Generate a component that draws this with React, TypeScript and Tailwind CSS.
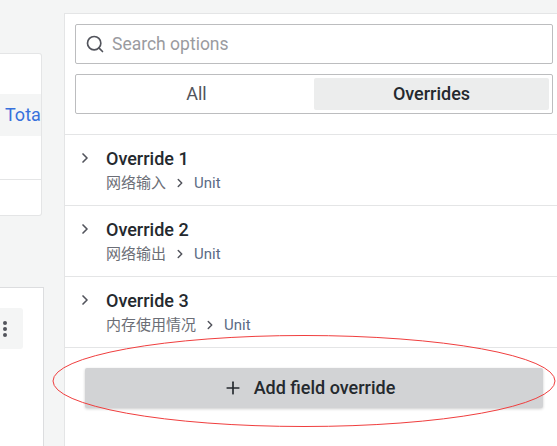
import React from 'react';
import { ChevronRight, Plus, Search } from 'lucide-react';

const overrides = [
  { name: 'Override 1', field: '网络输入' },
  { name: 'Override 2', field: '网络输出' },
  { name: 'Override 3', field: '内存使用情况' },
];

const font = { fontFamily: 'Roboto, "Noto Sans CJK SC", sans-serif' };

const App: React.FC = () => {
  return (
    <div className="relative flex h-[446px] w-[557px] overflow-hidden bg-[#f4f5f5]" style={font}>
      {/* left column, cut off by the window */}
      <div className="flex w-[64px] shrink-0 flex-col">
        <div className="mt-[53px] flex h-[163px] w-[42px] flex-col rounded-r-[3px] border border-l-0 border-[#e4e5e6] bg-white">
          <div className="mt-[40px] flex h-[42px] items-center overflow-hidden bg-[#f4f5f5] pb-[2px] pl-[5px] text-[18px] whitespace-nowrap text-[#3871dc]">
            Tota
          </div>
          <div className="mt-[43px] border-t border-[#e4e5e6]" />
        </div>
        <div className="mt-[71px] flex flex-1 w-[44px] flex-col border border-b-0 border-l-0 border-[#dcdddf] bg-white pt-[20px]">
          <div className="flex h-[41px] w-[23px] items-center justify-end rounded-r-[3px] bg-[#f4f5f5] pr-[16px]">
            <div className="flex flex-col gap-[2px]">
              <span className="h-[4px] w-[4px] rounded-full bg-[#52545c]" />
              <span className="h-[4px] w-[4px] rounded-full bg-[#52545c]" />
              <span className="h-[4px] w-[4px] rounded-full bg-[#52545c]" />
            </div>
          </div>
        </div>
      </div>

      {/* options pane */}
      <div className="mt-[13px] flex flex-1 flex-col border-t border-l border-[#e4e5e6] bg-white">
        <div className="flex flex-col gap-[10px] pt-[10px] pr-[4px] pb-[20px] pl-[10px] border-b border-[#e4e5e6]">
          <div className="flex h-[40px] items-center rounded-[2px] border border-[#bcbdbf] pl-[10px]">
            <Search size={20} strokeWidth={2} className="-ml-[1px] text-[#52545c]" />
            <span className="mt-[1px] ml-[7px] text-[17.5px] text-[#9a9b9f]">Search options</span>
          </div>
          <div className="flex h-[40px] rounded-[2px] border border-[#bcbdbf] p-[3px]">
            <div className="flex flex-1 items-center justify-center pb-[1px] text-[18px] text-[#52545c]">All</div>
            <div className="flex w-[235px] items-center justify-center rounded-[2px] bg-[#eceded] pb-[1px] text-[18px] font-medium text-[#24292e]">
              Overrides
            </div>
          </div>
        </div>

        {overrides.map((o) => (
          <div key={o.name} className="flex h-[71px] border-b border-[#e4e5e6] pt-[13px] pl-[12px]">
            <ChevronRight size={16} strokeWidth={2.5} className="mt-[2px] text-[#52545c]" />
            <div className="ml-[13px] flex flex-col">
              <div className="text-[18px] leading-[22px] font-medium text-[#24292e]">{o.name}</div>
              <div className="mt-[4px] flex items-center text-[15px] leading-[18px] text-[#6b6e76]">
                <span>{o.field}</span>
                <ChevronRight size={14} strokeWidth={2.5} className="mx-[7px] text-[#52545c]" />
                <span className="text-[#5b6b85]">Unit</span>
              </div>
            </div>
          </div>
        ))}

        <div className="pt-[20px] pr-[14px] pl-[20px]">
          <div className="flex h-[40px] items-center justify-center rounded-[2px] bg-[#d2d3d5] pr-[10px] pb-[2px] text-[18px] font-medium text-[#24292e] shadow-[0_1px_3px_rgba(0,0,0,0.2)]">
            <Plus size={20} strokeWidth={2} className="mt-[2px] mr-[11px]" />
            Add field override
          </div>
        </div>
      </div>

      {/* hand-drawn annotation */}
      <svg className="absolute top-[335px] left-[52px]" width="505" height="94" viewBox="0 0 505 94" fill="none">
        <ellipse cx="252" cy="46" rx="251" ry="45.5" stroke="#f03e3e" strokeWidth="1" />
      </svg>
    </div>
  );
};

export default App;
